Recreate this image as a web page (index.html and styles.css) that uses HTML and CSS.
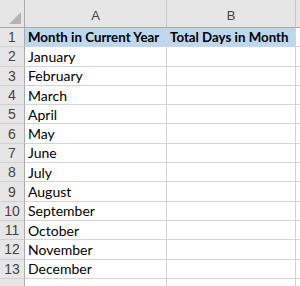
FILE: index.html
```html
<!DOCTYPE html>
<html>
<head>
<meta charset="utf-8">
<link rel="stylesheet" href="styles.css">
</head>
<body>
<div class="sheet">
  <div class="corner"><span class="tri"></span></div>
  <div class="colhead">A</div>
  <div class="colhead">B</div>
  <div class="colhead extra"></div>

  <div class="rowhead">1</div><div class="cell hdr">Month in Current Year</div><div class="cell hdr">Total Days in Month</div><div class="cell extra"></div>
  <div class="rowhead">2</div><div class="cell">January</div><div class="cell"></div><div class="cell extra"></div>
  <div class="rowhead">3</div><div class="cell">February</div><div class="cell"></div><div class="cell extra"></div>
  <div class="rowhead">4</div><div class="cell">March</div><div class="cell"></div><div class="cell extra"></div>
  <div class="rowhead">5</div><div class="cell">April</div><div class="cell"></div><div class="cell extra"></div>
  <div class="rowhead">6</div><div class="cell">May</div><div class="cell"></div><div class="cell extra"></div>
  <div class="rowhead">7</div><div class="cell">June</div><div class="cell"></div><div class="cell extra"></div>
  <div class="rowhead">8</div><div class="cell">July</div><div class="cell"></div><div class="cell extra"></div>
  <div class="rowhead">9</div><div class="cell">August</div><div class="cell"></div><div class="cell extra"></div>
  <div class="rowhead">10</div><div class="cell">September</div><div class="cell"></div><div class="cell extra"></div>
  <div class="rowhead">11</div><div class="cell">October</div><div class="cell"></div><div class="cell extra"></div>
  <div class="rowhead">12</div><div class="cell">November</div><div class="cell"></div><div class="cell extra"></div>
  <div class="rowhead">13</div><div class="cell">December</div><div class="cell"></div><div class="cell extra"></div>
  <div class="rowhead"></div><div class="cell"></div><div class="cell"></div><div class="cell extra"></div>
</div>
</body>
</html>
```
FILE: styles.css
```css
html, body {
  margin: 0;
  padding: 0;
  background: #ffffff;
  overflow: hidden;
}
.sheet {
  display: grid;
  grid-template-columns: 25px 142px 129px 4px;
  grid-template-rows: 28px repeat(14, 19.3px);
  width: 300px;
  height: 286px;
  font-family: "Lato", "Liberation Sans", sans-serif;
  font-size: 14px;
  color: #000;
}
.corner {
  background: #e6e6e6;
  border-right: 1px solid #ababab;
  border-bottom: 1px solid #ababab;
  position: relative;
}
.tri {
  position: absolute;
  right: 3px;
  bottom: 3px;
  width: 0;
  height: 0;
  border-left: 12px solid transparent;
  border-bottom: 12px solid #b4b4b4;
}
.colhead {
  background: #e6e6e6;
  border-right: 1px solid #c6c6c6;
  border-bottom: 1px solid #ababab;
  display: flex;
  align-items: flex-end;
  justify-content: center;
  padding-bottom: 4px;
  color: #444;
  font-family: "Liberation Sans", sans-serif;
  font-size: 13px;
}
.colhead.extra {
  border-right: none;
}
.rowhead {
  background: #e6e6e6;
  border-right: 1px solid #ababab;
  border-bottom: 1px solid #d0d0d0;
  display: flex;
  align-items: center;
  justify-content: center;
  color: #444;
  font-family: "Liberation Sans", sans-serif;
  font-size: 14px;
}
.cell {
  border-right: 1px solid #d4d4d4;
  border-bottom: 1px solid #d4d4d4;
  display: flex;
  align-items: center;
  padding-left: 3px;
  white-space: nowrap;
  overflow: visible;
  box-sizing: border-box;
}
.cell.extra {
  border-right: none;
  padding: 0;
}
.hdr {
  background: #bdd7ee;
  font-weight: bold;
  font-size: 13.3px;
}
.sheet > div {
  box-sizing: border-box;
  min-width: 0;
}
```
